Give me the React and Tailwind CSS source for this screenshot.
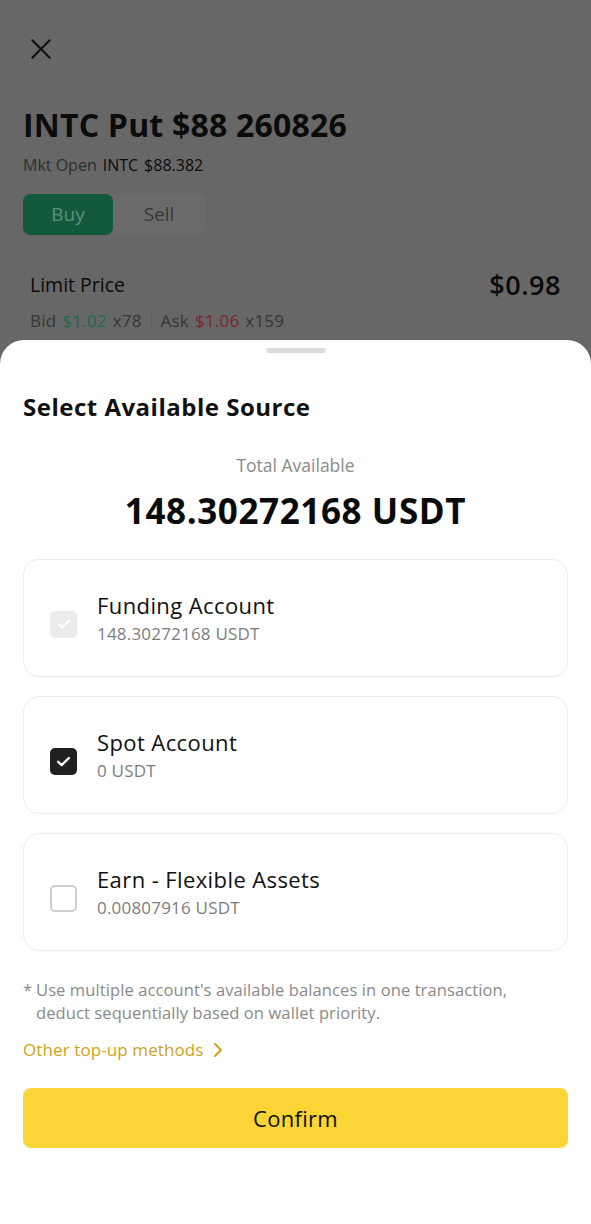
import { useState } from 'react';

const FONT = { fontFamily: '"Open Sans", "Liberation Sans", sans-serif' };

const SOURCES = [
  { id: 'funding', name: 'Funding Account', amount: '148.30272168 USDT', state: 'locked' },
  { id: 'spot', name: 'Spot Account', amount: '0 USDT', state: 'on' },
  { id: 'earn', name: 'Earn - Flexible Assets', amount: '0.00807916 USDT', state: 'off' },
];

function Check({ state }) {
  if (state === 'locked') {
    return (
      <div className="w-[27px] h-[27px] rounded-[5px] bg-[#ebebeb] flex items-center justify-center">
        <svg width="16" height="16" viewBox="0 0 16 16" fill="none">
          <path d="M3 8.3l3.2 3.1L13 4.8" stroke="#fff" strokeWidth="2" strokeLinecap="round" strokeLinejoin="round" />
        </svg>
      </div>
    );
  }
  if (state === 'on') {
    return (
      <div className="w-[27px] h-[27px] rounded-[5px] bg-[#202020] flex items-center justify-center">
        <svg width="17" height="17" viewBox="0 0 16 16" fill="none">
          <path d="M3 8.3l3.2 3.1L13 4.8" stroke="#fff" strokeWidth="2.2" strokeLinecap="round" strokeLinejoin="round" />
        </svg>
      </div>
    );
  }
  return <div className="w-[27px] h-[27px] rounded-[5px] border-2 border-[#cfcfcf] bg-white" />;
}

export default function App() {
  const [selected] = useState(SOURCES);

  return (
    <div className="w-[591px] h-[1224px] bg-[#676767] relative overflow-hidden" style={FONT}>
      {/* dimmed order page behind */}
      <div className="px-[23px] pt-[36px]">
        <svg width="26" height="26" viewBox="0 0 24 24" fill="none" className="ml-[5px]">
          <path d="M4 4l16 16M20 4L4 20" stroke="#111" strokeWidth="2" strokeLinecap="round" />
        </svg>
        <div className="mt-[43px] text-[32px] font-bold text-[#0b0b0b] leading-[40px] tracking-[0.2px]">INTC Put $88 260826</div>
        <div className="mt-[8px] flex items-center gap-[6px] text-[16px] leading-[24px]">
          <span className="text-[#2e2e2e]">Mkt Open</span>
          <span className="text-[#0b0b0b] font-medium">INTC</span>
          <span className="text-[#0b0b0b] font-medium">$88.382</span>
        </div>
        <div className="mt-[17px] flex w-[182px] h-[41px] rounded-[7px] bg-[#6b6b6b]">
          <div className="w-[90px] rounded-[7px] bg-[#135a3c] flex items-center justify-center text-[19px] text-[#5b937a]">Buy</div>
          <div className="flex-1 flex items-center justify-center text-[19px] text-[#383838]">Sell</div>
        </div>
        <div className="mt-[35px] px-[7px] flex items-center justify-between h-[30px]">
          <span className="text-[19.5px] font-medium text-[#0b0b0b]">Limit Price</span>
          <span className="text-[27px] font-semibold text-[#0b0b0b] tracking-[0.5px]">$0.98</span>
        </div>
        <div className="mt-[8px] px-[7px] flex items-center text-[17px] text-[#353535] tracking-[0.2px]">
          <span>Bid</span>
          <span className="ml-[6px] text-[#1a6b4b]">$1.02</span>
          <span className="ml-[6px]">x78</span>
          <span className="mx-[9px] w-px h-[16px] bg-[#5e5e5e]" />
          <span>Ask</span>
          <span className="ml-[6px] text-[#7c2430]">$1.06</span>
          <span className="ml-[6px]">x159</span>
        </div>
      </div>

      {/* bottom sheet */}
      <div className="absolute left-0 right-0 top-[340px] bottom-0 bg-white rounded-t-[24px] px-[23px]">
        <div className="mx-auto mt-[8px] w-[60px] h-[5px] rounded-full bg-[#dcdcdc]" />
        <div className="mt-[39px] text-[24px] font-bold text-[#111] leading-[30px] tracking-[0.5px]">Select Available Source</div>
        <div className="mt-[31px] text-center text-[17.5px] text-[#8a8a8a] leading-[24px]">Total Available</div>
        <div className="mt-[13px] text-center text-[35px] font-bold text-[#0b0b0b] leading-[42px] tracking-[0.6px]">148.30272168 USDT</div>

        <div className="mt-[27px] flex flex-col gap-[19px]">
          {selected.map((s) => (
            <div key={s.id} className="h-[118px] rounded-[16px] border border-[#ececec] flex items-center pl-[26px]">
              <div className="mt-[12px]">
                <Check state={s.state} />
              </div>
              <div className="ml-[20px] flex flex-col">
                <span className="text-[22px] font-medium text-[#111] leading-[28px] tracking-[0.4px]">{s.name}</span>
                <span className="mt-[4px] text-[17px] text-[#7d7d7d] leading-[22px] tracking-[0.2px]">{s.amount}</span>
              </div>
            </div>
          ))}
        </div>

        <div className="mt-[27px] pr-[40px] flex text-[16.5px] text-[#8a8a8a] leading-[23px] tracking-[0.1px]">
          <span className="w-[13px] shrink-0">*</span>
          <span>Use multiple account's available balances in one transaction, deduct sequentially based on wallet priority.</span>
        </div>
        <div className="mt-[14px] flex items-center gap-[9px] text-[17px] text-[#d0a21a] leading-[24px] tracking-[0.1px]">
          <span>Other top-up methods</span>
          <svg width="10" height="16" viewBox="0 0 10 16" fill="none">
            <path d="M2 2l6 6-6 6" stroke="#d0a21a" strokeWidth="2" strokeLinecap="round" strokeLinejoin="round" />
          </svg>
        </div>

        <button className="mt-[26px] w-full h-[60px] rounded-[8px] bg-[#fad535] text-[22px] font-medium text-[#111] flex items-center justify-center tracking-[0.3px]">
          Confirm
        </button>
      </div>
    </div>
  );
}
